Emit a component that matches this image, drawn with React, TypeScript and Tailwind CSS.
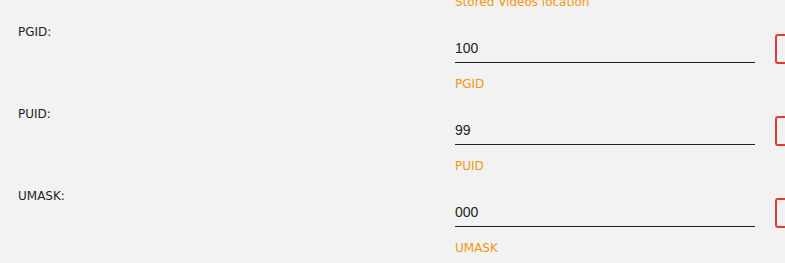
import React from "react";

const rows = [
  { label: "PGID:", value: "100", helper: "PGID" },
  { label: "PUID:", value: "99", helper: "PUID" },
  { label: "UMASK:", value: "000", helper: "UMASK" },
];

export default function App() {
  return (
    <div className="w-[785px] h-[263px] overflow-hidden bg-[#f2f2f2] text-[#222]" style={{ fontFamily: '"DejaVu Sans", sans-serif' }}>
      <div className="-mt-[6px] pl-[455px] text-[12px] leading-[16px] text-[#f2960f]">Stored Videos location</div>
      <div className="flex flex-col gap-[14px] pt-[14px]">
        {rows.map((r) => (
          <div key={r.label} className="flex items-start pl-[18px]">
            <div className="w-[437px] shrink-0 text-[12px] leading-[16px] text-[#1f1f1f]">{r.label}</div>
            <div className="flex flex-col pt-[10px]">
              <div className="flex items-start gap-[20px]">
                <div
                  className="w-[300px] h-[29px] border-b border-[#222] flex items-center text-[14px] text-[#222]"
                  style={{ fontFamily: '"Liberation Sans", Arial, sans-serif' }}
                >
                  {r.value}
                </div>
                <div className="w-[40px] h-[30px] shrink-0 rounded-[3px] border-2 border-[#e53935]" />
              </div>
              <div className="mt-[12px] text-[12px] leading-[16px] text-[#f2960f]">{r.helper}</div>
            </div>
          </div>
        ))}
      </div>
    </div>
  );
}
